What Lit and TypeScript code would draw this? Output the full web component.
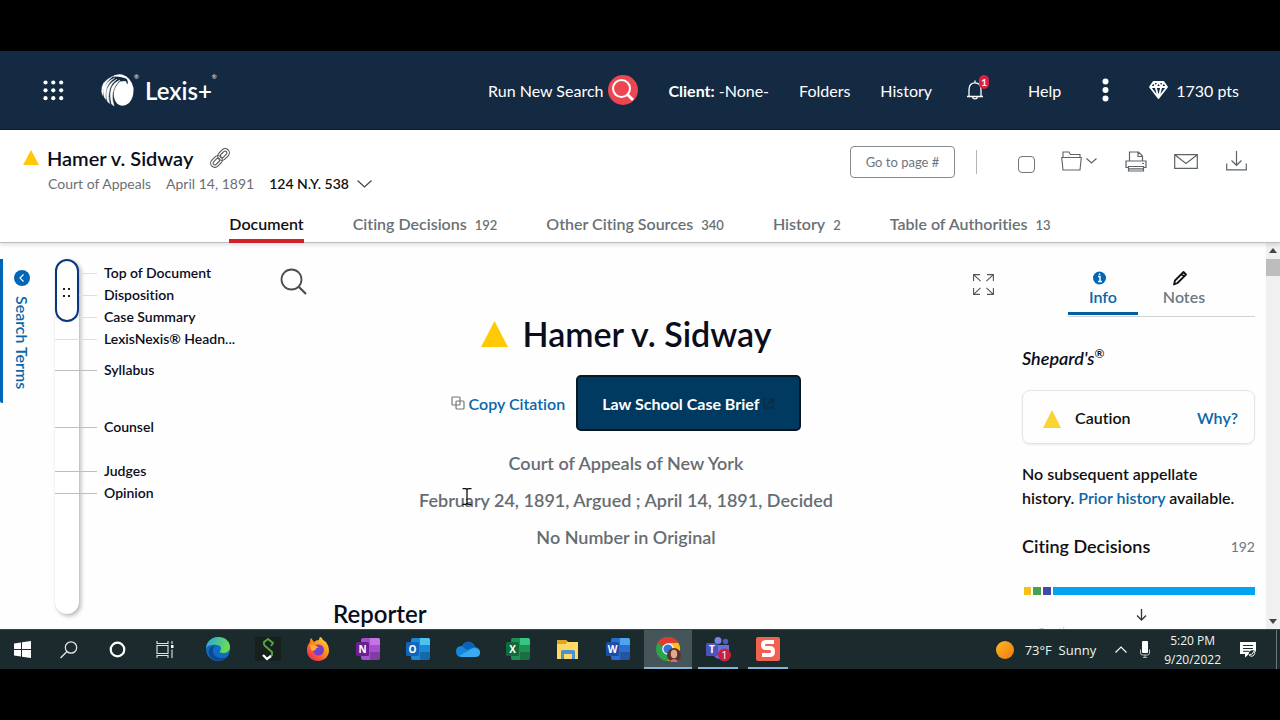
import { LitElement, html, css, svg, nothing } from "lit";
import { customElement } from "lit/decorators.js";
import { classMap } from "lit/directives/class-map.js";
import { styleMap } from "lit/directives/style-map.js";

const caution = html`<svg class="caution" viewBox="0 0 16 16" preserveAspectRatio="none" aria-label="Caution"><path d="M8 0 16 16H0Z" fill="currentColor" /></svg>`;

const base = css`
  :host { display: block; box-sizing: border-box; font-family: Lato, "Liberation Sans", sans-serif; font-variant-ligatures: none; color: #0a0d1c; }
  * { box-sizing: border-box; }
  svg { display: block; flex: none; }
  a { color: inherit; text-decoration: none; }
  button { font: inherit; color: inherit; background: none; border: 0; padding: 0; margin: 0; cursor: pointer; }
  h1, h2, h3, p, ol, ul { margin: 0; padding: 0; }
  ol, ul { list-style: none; }
`;

@customElement("site-header")
class SiteHeader extends LitElement {
  static styles = [base, css`
    .bar { display: flex; align-items: center; height: 79px; padding: 0 41px 0 43px; background: #142a42; border-bottom: 1px solid #0b1c30; color: #fff; font-size: 16px; }
    .brand { display: flex; align-items: center; margin-left: 37px; }
    .word { font-size: 24px; font-weight: 600; margin-left: 6px; }
    .reg { font-size: 6px; align-self: flex-start; }
    nav { display: flex; align-items: center; gap: 30px; margin-left: auto; }
    .run { display: flex; align-items: center; gap: 5px; }
    b { font-weight: 700; }
    .bell { position: relative; width: 36px; padding-left: 4px; }
    .count { position: absolute; left: 17px; top: -5px; width: 10px; height: 14px; border-radius: 7px; background: #dc1f45; font-size: 10px; line-height: 14px; font-weight: 700; text-align: center; }
    .more { width: 28px; display: grid; place-items: center; }
    .pts { display: flex; align-items: center; gap: 8px; }
  `];
  render() {
    return html`<header class="bar">
      <button aria-label="Products"><svg width="21" height="21" viewBox="0 0 21 21" fill="#fff">
        ${[2.5, 10.3, 18.2].map((y) => [2.5, 10.3, 18.2].map((x) => svg`<circle cx=${x} cy=${y} r="2.1" />`))}</svg></button>
      <a class="brand" href="#">
        <svg width="33" height="34" viewBox="0 0 33 34">
          <path d="M10 4Q15 .5 21 1.500Q30 4 32.500 15Q33 25 28 30Q22 35 16.500 31Q12.500 27 12.800 21Q13 14 19 8.500L24.500 8 26.500 11.500Q27.500 7 25 5.500Q17 2.500 10 4Z" fill="#fff" />
          <path d="M19 7Q6 12 10.500 31L13 33Q8 18 19 7Z M16 6Q2 13 6.500 28.500L8.500 30.500Q5 14 16 6Z M13.500 5Q0 11 3.200 24L5 26.500Q3 12 13.500 5Z M11 4Q0 8 .7 19L1.900 22.500Q2 11 11 4Z" fill="#fff" stroke="#fff" stroke-width=".5" />
        </svg>
        <span class="reg">®</span><span class="word">Lexis+</span><span class="reg">®</span>
      </a>
      <nav>
        <button class="run">Run New Search
          <svg width="30" height="30" viewBox="0 0 30 30" fill="none"><circle cx="15" cy="15" r="15" fill="#ee4650" /><circle cx="13.500" cy="13.500" r="8.500" stroke="#fff" stroke-width="2" /><path d="m19.500 19.500 5.500 5.500" stroke="#fff" stroke-width="2.800" /></svg>
        </button>
        <button><b>Client:</b> -None-</button>
        <a href="#">Folders</a>
        <a href="#">History</a>
        <button class="bell" aria-label="Notifications">
          <svg width="18" height="20" viewBox="0 0 18 20" fill="none" stroke="#fff" stroke-width="1.300"><path d="M1 16.500h16M3 16.500V9.500C3 5 5.500 2.800 9 2.800S15 5 15 9.500v7M9 .5v2.300M6.500 17c.4 2.600 4.600 2.600 5 0" /></svg>
          <span class="count">1</span>
        </button>
        <a href="#">Help</a>
        <button class="more" aria-label="More"><svg width="7" height="24" viewBox="0 0 7 24" fill="#fff"><circle cx="3.500" cy="3.500" r="3" /><circle cx="3.500" cy="12" r="3" /><circle cx="3.500" cy="20.500" r="3" /></svg></button>
        <a class="pts" href="#">
          <svg width="19" height="18" viewBox="0 0 19 18" fill="none" stroke="#fff" stroke-width="1.800" stroke-linejoin="round"><path d="M4.500 1h10l3.500 5-8.500 11L1 6ZM1 6h17M4.500 1l2.200 5 2.800 11 2.800-11 2.200-5M6.700 6 9.500 1l2.800 5" /></svg>
          1730 pts</a>
      </nav>
    </header>`;
  }
}

@customElement("document-header")
class DocumentHeader extends LitElement {
  static styles = [base, css`
    :host { position: relative; z-index: 1; background: #fff; box-shadow: 0 2px 4px rgba(0, 0, 0, .12); border-bottom: 1px solid #bdbdba; }
    .top { display: flex; justify-content: space-between; padding: 16px 33px 0 23px; }
    .name { display: flex; align-items: center; gap: 8px; height: 24px; }
    .name .caution { width: 16px; height: 15px; margin-bottom: 2px; color: #ffca05; }
    h2 { font-size: 20px; line-height: 24px; font-weight: 600; }
    .copy { margin-left: 9px; }
    .meta { display: flex; align-items: center; gap: 15px; padding-left: 25px; font-size: 14px; line-height: 28px; color: #6b6f73; }
    .cite { display: flex; align-items: center; gap: 8px; color: #111; font-weight: 600; }
    .tools { display: flex; align-items: center; height: 32px; color: #5d6468; }
    .page { width: 105px; height: 32px; border: 1px solid #858b8f; border-radius: 4px; background: #fff; font: 400 13px Lato, sans-serif; color: #6b6f73; padding: 0 4px; text-align: center; }
    .page::placeholder { color: #70757a; opacity: 1; }
    .rule { width: 1px; height: 24px; background: #b5b5b5; margin: 0 41px 0 21px; }
    .pick { appearance: none; width: 17px; height: 17px; margin: 5px 26px 0 0; border: 1px solid #6f7579; border-radius: 4px; background: #fff; }
    .folder { display: flex; align-items: center; gap: 4px; margin-right: 28px; }
    .tools button { margin-bottom: 2px; }
    .tools .mail { margin: 0 28px 2px 27px; }
    .tabs { display: flex; justify-content: center; gap: 49px; margin: 11px 0 -1px; font-size: 16px; font-weight: 600; color: #6a7176; }
    .tab { display: flex; align-items: baseline; gap: 8px; height: 34px; line-height: 30px; border-bottom: 4px solid transparent; }
    .tab.on { color: #111; border-color: #d02127; }
    .num { font-size: 13px; }
  `];
  render() {
    const tabs: [string, string][] = [["Document", ""], ["Citing Decisions", "192"], ["Other Citing Sources", "340"], ["History", "2"], ["Table of Authorities", "13"]];
    return html`
      <div class="top">
        <div>
          <div class="name">${caution}<h2>Hamer v. Sidway</h2>
            <button class="copy" aria-label="Copy link"><svg width="20" height="20" viewBox="0 0 20 20" fill="none" stroke="#555" stroke-width="1.100"><g transform="rotate(-45 10 10)"><rect x="-1.500" y="5.800" width="13" height="8.400" rx="4.200" /><rect x="1" y="8.200" width="8" height="3.600" rx="1.800" /><rect x="8.500" y="5.800" width="13" height="8.400" rx="4.200" /><rect x="11" y="8.200" width="8" height="3.600" rx="1.800" /></g></svg></button>
          </div>
          <div class="meta"><span>Court of Appeals</span><span>April 14, 1891</span>
            <button class="cite">124 N.Y. 538 <svg width="15" height="8" viewBox="0 0 15 8" fill="none" stroke="#444" stroke-width="1.200"><path d="m.5.5 7 6.500 7-6.500" /></svg></button></div>
        </div>
        <div class="tools">
          <input class="page" aria-label="Go to page number" placeholder="Go to page #" />
          <span class="rule"></span>
          <input class="pick" type="checkbox" aria-label="Select document" />
          <button class="folder" aria-label="Save to folder">
            <svg width="21" height="20" viewBox="0 0 21 20" fill="none" stroke="currentColor" stroke-width="1.100"><path d="M2 6.500V1h6l1.500 2.500H19v3M.7 6.500h19.600L19 19H2Z" /></svg>
            <svg width="11" height="6" viewBox="0 0 11 6" fill="none" stroke="currentColor" stroke-width="1.200"><path d="m.5.500 5 4.500 5-4.500" /></svg>
          </button>
          <button aria-label="Print"><svg width="22" height="21" viewBox="0 0 22 21" fill="none" stroke="currentColor" stroke-width="1.200"><path d="M4.500 10V1h9l4 4v5M13 1v4.500h4.500M3.500 16.500H1v-6.500h20v6.500h-2.500M3.500 15.500h15V20h-15ZM3.500 17.800h15M17 12.500h2" /></svg></button>
          <button class="mail" aria-label="Email"><svg width="24" height="15" viewBox="0 0 24 15" fill="none" stroke="currentColor" stroke-width="1.200"><path d="M.7.7h22.600v13.600H.7ZM.7.7 12 9.500 23.300.7" /></svg></button>
          <button aria-label="Download"><svg width="21" height="20" viewBox="0 0 21 20" fill="none" stroke="currentColor" stroke-width="1.200"><path d="M10.500 0v14M5.500 9.500l5 4.800 5-4.800M.7 12.500v6.300h19.600v-6.300" /></svg></button>
        </div>
      </div>
      <nav class="tabs">${tabs.map(([t, n], i) => html`<a href="#" class=${classMap({ tab: true, on: i === 0 })}>${t}${n ? html`<span class="num">${n}</span>` : nothing}</a>`)}</nav>`;
  }
}

@customElement("document-outline")
class DocumentOutline extends LitElement {
  static styles = [base, css`
    :host { display: flex; align-items: flex-start; padding-top: 16px; }
    .terms { display: flex; align-items: center; writing-mode: vertical-rl; gap: 10px; width: 45px; height: 144px; padding: 11px 15px 0 11px; border-left: 3px solid #0067b8; border-radius: 0 0 0 2px; color: #0a66a8; font-size: 16px; font-weight: 600; white-space: nowrap; }
    .map { display: grid; flex: 1; margin-left: 10px; }
    .map > * { grid-area: 1 / 1; }
    .track { width: 24px; height: 355px; border-radius: 12px; background: #fff; box-shadow: 2px 2px 4px rgba(0, 0, 0, .28), 0 0 1px rgba(0, 0, 0, .15); }
    ol { padding-top: 3px; font-size: 14px; font-weight: 600; line-height: 22px; }
    li { display: flex; align-items: center; gap: 7px; }
    li::before { content: ""; width: 42px; height: 1px; background: #bcbec2; }
    .pale::before { background: #dcdee1; }
    input { appearance: none; writing-mode: vertical-lr; width: 24px; height: 355px; margin: 0; background: none; }
    input::-webkit-slider-thumb { appearance: none; width: 24px; height: 63px; border: 2px solid #0b3780; border-radius: 12px;
      background: conic-gradient(#222 0 0) 6px 27px / 2px 2px no-repeat, conic-gradient(#222 0 0) 11px 27px / 2px 2px no-repeat, conic-gradient(#222 0 0) 6px 34px / 2px 2px no-repeat, conic-gradient(#222 0 0) 11px 34px / 2px 2px no-repeat, #fff; }
    .find { margin: 9px 26px 0 0; }
  `];
  items: { label: string; space: number; pale?: boolean }[] = [
    { label: "Top of Document", space: 0, pale: true }, { label: "Disposition", space: 0, pale: true }, { label: "Case Summary", space: 0, pale: true },
    { label: "LexisNexis® Headn...", space: 0, pale: true }, { label: "Syllabus", space: 9 }, { label: "Counsel", space: 35 }, { label: "Judges", space: 22 }, { label: "Opinion", space: 0 },
  ];
  render() {
    return html`
      <button class="terms"><svg width="16" height="16" viewBox="0 0 16 16"><circle cx="8" cy="8" r="8" fill="#0067b8" /><path d="M9.500 4.500 6 8l3.500 3.500" fill="none" stroke="#fff" stroke-width="1.200" /></svg>Search Terms</button>
      <div class="map">
        <div class="track"></div>
        <ol>${this.items.map((i) => html`<li class=${classMap({ pale: !!i.pale })} style=${styleMap({ marginTop: `${i.space}px` })}><a href="#">${i.label}</a></li>`)}</ol>
        <input type="range" min="0" max="100" value="0" aria-label="Position in document" />
      </div>
      <button class="find" aria-label="Search in document"><svg width="27" height="27" viewBox="0 0 27 27" fill="none" stroke="#4d4d4d" stroke-width="1.800"><circle cx="11.500" cy="11.500" r="10" /><path d="m18.500 18.500 7.500 7.500" stroke-width="2.200" /></svg></button>`;
  }
}

@customElement("case-document")
class CaseDocument extends LitElement {
  static styles = [base, css`
    :host { text-align: center; }
    h1 { display: flex; align-items: center; justify-content: center; gap: 15px; margin-top: 69px; font-size: 34px; line-height: 44px; font-weight: 600; }
    h1 .caution { width: 27px; height: 26px; color: #ffca05; }
    .actions { display: flex; align-items: center; justify-content: center; gap: 11px; margin: 19px 0 14px; font-size: 16px; font-weight: 600; }
    .copy { display: flex; align-items: center; gap: 4px; color: #0a66a8; }
    .brief { display: flex; align-items: center; gap: 4px; height: 56px; padding: 0 25px 0 24px; background: #003a61; border: 2px solid #0b1622; border-radius: 5px; color: #fff; font-weight: 700; }
    .court { font-size: 18px; line-height: 37px; font-weight: 600; color: #666d71; }
    h2 { text-align: left; margin-top: 43px; font-size: 24px; line-height: 30px; font-weight: 600; }
  `];
  render() {
    return html`
      <h1>${caution}Hamer v. Sidway</h1>
      <div class="actions">
        <button class="copy"><svg width="14" height="14" viewBox="0 0 14 14" fill="none" stroke="#777" stroke-width="1.200"><rect x="1" y="1" width="8" height="8" rx="1" /><rect x="5" y="5" width="8" height="8" rx="1" /></svg>Copy Citation</button>
        <a class="brief" href="#">Law School Case Brief<svg width="11" height="11" viewBox="0 0 11 11" fill="none" stroke="#10273d" stroke-width="1.200"><path d="M4 1H1v9h9V7M3.500 7.500l6-6M6 1h4v4" /></svg></a>
      </div>
      <p class="court">Court of Appeals of New York</p>
      <p class="court">February 24, 1891, Argued ; April 14, 1891, Decided</p>
      <p class="court">No Number in Original</p>
      <h2>Reporter</h2>`;
  }
}

@customElement("case-sidebar")
class CaseSidebar extends LitElement {
  static styles = [base, css`
    :host { padding-top: 26px; }
    .tabs { display: flex; margin-left: 46px; border-bottom: 1px solid #d0d3d5; height: 48px; font-size: 16px; line-height: 20px; font-weight: 600; color: #6a7a80; }
    .tab { display: flex; flex-direction: column; align-items: center; width: 70px; height: 46px; border-bottom: 3px solid transparent; }
    .tab.on { color: #0a66a8; border-color: #00609f; }
    .tab:last-child { margin-left: 11px; }
    .shep { margin-top: 28px; font-size: 18px; line-height: 26px; font-style: italic; font-weight: 600; }
    sup { font-size: 12px; line-height: 1px; font-style: normal; }
    .card { display: flex; align-items: center; height: 54px; margin-top: 19px; padding: 0 16px 0 20px; border: 1px solid #e2e4e6; border-radius: 8px; box-shadow: 0 1px 2px rgba(0, 0, 0, .08); font-size: 16px; font-weight: 600; color: #111; }
    .card .caution { width: 18px; height: 18px; margin: 4px 14px 0 0; color: #fbd335; }
    .link { color: #0a66a8; }
    .card .link { margin-left: auto; }
    .note { margin-top: 18px; padding-right: 12px; font-size: 16px; line-height: 24px; font-weight: 600; color: #111; }
    .head { display: flex; justify-content: space-between; align-items: center; margin-top: 24px; }
    h3 { font-size: 18px; line-height: 24px; font-weight: 600; color: #111; }
    .total { font-size: 14px; color: #70757a; }
    .chart { display: flex; gap: 2px; height: 8px; margin: 29px 0 14px; padding-left: 2px; }
    .down { display: block; margin-left: 114px; }
    .row { margin: 4px 0 0 15px; font-size: 12px; line-height: 14px; color: #c5c8ca; }
  `];
  render() {
    const parts: [string, string][] = [["#f5bf1c", "0 0 7px"], ["#47a250", "0 0 8px"], ["#4148a5", "0 0 8px"], ["#03a4f2", "1"]];
    return html`
      <div class="tabs">
        <button class="tab on"><svg width="21" height="18" viewBox="-4 0 21 18"><circle cx="2.500" cy="9" r="6.500" fill="#0067b8" /><path d="M1 7.500h2v5M1 12.500h4M2.500 4.500v1.600" fill="none" stroke="#fff" stroke-width="1.400" /></svg>Info</button>
        <button class="tab"><svg width="22" height="18" viewBox="0 0 22 18" fill="none" stroke="#111" stroke-width="1.800" stroke-linejoin="round"><path d="m1 15.500 1-4L10.500 3l2.500 2.500L4.500 14ZM8.500 5l2.500 2.500M1 15.500l2-1" /></svg>Notes</button>
      </div>
      <p class="shep">Shepard's<sup>®</sup></p>
      <div class="card">${caution}Caution<a class="link" href="#">Why?</a></div>
      <p class="note">No subsequent appellate history. <a class="link" href="#">Prior history</a> available.</p>
      <div class="head"><h3>Citing Decisions</h3><span class="total">192</span></div>
      <div class="chart">${parts.map(([background, flex]) => html`<span style=${styleMap({ background, flex })}></span>`)}</div>
      <button class="down" aria-label="Scroll down"><svg width="11" height="12" viewBox="0 0 11 12" fill="none" stroke="#333" stroke-width="1.300"><path d="M5.500 0v11M1 6.500l4.500 4.500L10 6.500" /></svg></button>
      <p class="row">Caution</p>`;
  }
}

const office = (letter: string, back: string, light: string, plate: string) => svg`
  <rect x="6" y="1" width="19" height="22" rx="2" fill=${back} /><path d="M15 1h8q2 0 2 2v5H15Z" fill=${light} /><path d="M15 15h10v6q0 2-2 2h-8Z" fill="#000" opacity=".22" />
  <rect x="1" y="5" width="13" height="14" rx="1.500" fill=${plate} /><text x="7.500" y="15.500" text-anchor="middle" font-family="Open Sans, sans-serif" font-size="10" font-weight="700" fill="#fff">${letter}</text>`;

@customElement("task-bar")
class TaskBar extends LitElement {
  static styles = [base, css`
    :host { display: flex; height: 40px; background: #1b2b2d; color: #f2f4f4; font-family: "Open Sans", "Noto Sans", sans-serif; border-top: 1px solid #3a4446; }
    .group { display: flex; }
    .pins { margin-left: 4px; }
    .app { display: grid; place-items: center; width: 48px; }
    .start { width: 45px; }
    .pins .app { width: 50px; }
    .pins .open { width: 40px; margin: 0 5px; box-shadow: inset 0 -2px #82b4dc; }
    .pins .active { width: 48px; margin: 0 1px; background: #46555a; }
    .tray { display: flex; align-items: center; margin-left: auto; }
    .weather { display: flex; align-items: center; gap: 11px; font-size: 13px; white-space: pre; }
    .up { margin: 0 13px 0 19px; }
    .clock { margin: 0 19px 0 14px; font-size: 12px; line-height: 19px; text-align: center; }
    .peek { width: 4px; height: 39px; margin-left: 19px; border-left: 1px solid #6e797b; }
  `];
  apps = [
    { name: "Edge", art: svg`<defs><linearGradient id="e1" x1="0" y1="0" x2="1" y2=".3"><stop stop-color="#2aa5e0" /><stop offset="1" stop-color="#66dd55" /></linearGradient></defs><circle cx="13" cy="12" r="12" fill="#0f6cc0" /><path d="M1 11C2 4 7 0 13 0c8 0 12 5 12 10 0 4-3 6-7 6-3 0-4-1-3-2 2-2 1-6-3-6-5-1-9 0-11 3Z" fill="url(#e1)" /><path d="M8 12c-1 7 5 11 14 8-4 5-13 5-17-1-3-5-1-10 6-11-2 1-3 2-3 4Z" fill="#0b4a92" />` },
    { name: "Scribe", art: svg`<rect width="26" height="24" fill="#17201d" /><path d="M9 8V5l4-3 5 4-2 3M9 8l8 7v3l-3 2" fill="none" stroke="#58a742" stroke-width="1.800" /><path d="m8 18 4 4 4-3" fill="none" stroke="#fff" stroke-width="2.300" />` },
    { name: "Firefox", art: svg`<defs><linearGradient id="f1" x1="1" y1="0" x2=".2" y2="1"><stop stop-color="#ffe53b" /><stop offset=".5" stop-color="#ff8a20" /><stop offset="1" stop-color="#f0245c" /></linearGradient></defs><path d="M5 5q0-3 1-4l3 4q2-2 5-2 0-3 2-3 2 4 5 5 3 4 3 8c0 7-5 11-11 11S2 20 2 13q0-5 3-8Z" fill="url(#f1)" /><circle cx="13.500" cy="13" r="5.500" fill="#7a3fc8" /><path d="M5 8q5-1 9 3-3-1-3 1-1 3-5 1Z" fill="#ffb22b" />` },
    { name: "OneNote", art: office("N", "#a64fd0", "#c673e6", "#6b1f91") },
    { name: "Outlook", art: office("O", "#1a8ad8", "#50c2f0", "#0f66ba") },
    { name: "OneDrive", art: svg`<path d="M7 20q-6 0-6-5.500T7 9q3-5 8-4 4 1 5 5 5 1 5 5t-5 5Z" fill="#1486dc" /><path d="M7 9q3-5 8-4 4 1 5 5l-8 3Z" fill="#0b63b5" /><path d="M4 19 18 11q7 0 7 5 0 4-5 4H7Z" fill="#3aaaf0" />` },
    { name: "Excel", art: office("X", "#1f8f55", "#36c481", "#0f6b3a") },
    { name: "File Explorer", art: svg`<path d="M2 3h9l2 2h10v17H2Z" fill="#ffd866" /><path d="M2 3h9l1 2-1 2H2Z" fill="#e0a527" /><path d="M6 22v-7q0-2 2-2h10q2 0 2 2v7h-3v-5H9v5Z" fill="#4a93cc" />` },
    { name: "Word", art: office("W", "#2a6fd0", "#4ea5ee", "#1a4fa8") },
    { name: "Chrome", state: "active", art: svg`<circle cx="13" cy="12" r="12" fill="#2ba24c" /><path d="M13 12 2.600 6A12 12 0 0 1 23.400 6H13Z" fill="#e23b2e" /><path d="M13 12V6h10.400A12 12 0 0 1 13 24l5-9Z" fill="#fbc116" /><circle cx="13" cy="12" r="5.800" fill="#fff" /><circle cx="13" cy="12" r="4.600" fill="#3476e0" /><circle cx="19" cy="18" r="7" fill="#5a3527" /><ellipse cx="19" cy="17" rx="3.200" ry="4.200" fill="#e0aa90" /><path d="M15 24q4-4 8 0l-1 1h-6Z" fill="#d66a78" />` },
    { name: "Teams", state: "open", art: svg`<circle cx="13" cy="3.500" r="3.500" fill="#7b83eb" /><circle cx="20.500" cy="4.500" r="2.700" fill="#5059c9" /><path d="M8 8h16v8q-1 6-8 6t-8-6Z" fill="#6a70d8" /><rect x="1" y="6" width="12" height="13" rx="1.500" fill="#4b53bc" /><text x="7" y="16" text-anchor="middle" font-family="Open Sans, sans-serif" font-size="10" font-weight="700" fill="#fff">T</text><circle cx="19.500" cy="18" r="6.500" fill="#c8203f" /><text x="19.500" y="22" text-anchor="middle" font-family="Open Sans, sans-serif" font-size="11" fill="#fff">1</text>` },
    { name: "Snagit", state: "open", art: svg`<rect x="1" y="0" width="24" height="24" rx="2" fill="#f2604f" /><path d="M19 5h-8q-3 0-3 3t3 3h4q3 0 3 3.500T15 18H7" fill="none" stroke="#fff" stroke-width="4" />` },
  ];
  render() {
    return html`
      <div class="group">
        <button class="app start" aria-label="Start"><svg width="17" height="17" viewBox="0 0 17 17" fill="#fff"><path d="M0 2.500 7 1.500V8H0ZM8 1.300 17 0v8H8ZM0 9h7v6.500l-7-1ZM8 9h9v8l-9-1.300Z" /></svg></button>
        <button class="app" aria-label="Search"><svg width="18" height="18" viewBox="0 0 18 18" fill="none" stroke="#e8ecec" stroke-width="1.200"><circle cx="11" cy="6.500" r="5.700" /><path d="M7 10.500.5 17" /></svg></button>
        <button class="app" aria-label="Cortana"><svg width="17" height="17" viewBox="0 0 17 17" fill="none" stroke="#fff" stroke-width="2.200"><circle cx="8.500" cy="8.500" r="6.800" /></svg></button>
        <button class="app" aria-label="Task view"><svg width="18" height="17" viewBox="0 0 18 17" fill="none" stroke="#dfe5e5" stroke-width="1.100"><path d="M1 0v2.500h11V0M1 4.500h11v8H1ZM1 17v-2.500h11V17M16 0v3M16 8.500V17" /><path d="M15 4h2.500v3H15Z" fill="#fff" stroke="none" /></svg></button>
      </div>
      <div class="group pins">${this.apps.map((a) => html`<button aria-label=${a.name} class=${classMap({ app: true, open: !!a.state, active: a.state === "active" })}><svg width="26" height="25" viewBox="0 0 26 25">${a.art}</svg></button>`)}</div>
      <div class="tray">
        <button class="weather"><svg width="18" height="18" viewBox="0 0 18 18"><defs><linearGradient id="s1" x1="0" y1="0" x2="1" y2="1"><stop stop-color="#fcb928" /><stop offset="1" stop-color="#f07a0a" /></linearGradient></defs><circle cx="9" cy="9" r="9" fill="url(#s1)" /></svg>73°F  Sunny</button>
        <button class="up" aria-label="Hidden icons"><svg width="12" height="7" viewBox="0 0 12 7" fill="none" stroke="#fff" stroke-width="1.200"><path d="M.5 6.500 6 1l5.500 5.500" /></svg></button>
        <svg width="10" height="17" viewBox="0 0 10 17"><rect x="2" width="6" height="12" rx="1" fill="#fff" /><path d="M.5 8.500v3.500q0 2 2 2h5q2 0 2-2V8.500M5 14v2M3 16.400h4" fill="none" stroke="#b9c0c0" /></svg>
        <div class="clock">5:20 PM<br />9/20/2022</div>
        <button aria-label="Action center"><svg width="17" height="18" viewBox="0 0 17 18"><path d="M0 1h16v12H9l-4 3.500V13H0Z" fill="#fff" /><path d="M3 4.500h10M3 7.500h10M3 10.300h6" stroke="#1b2b2d" /><circle cx="12.500" cy="13" r="3.800" fill="#1b2b2d" /><path d="M14 10q2 3-1 5-2 1-4-1 4 0 5-4Z" fill="#1b2b2d" stroke="#e8ecec" /></svg></button>
        <span class="peek"></span>
      </div>`;
  }
}

@customElement("app-root")
class AppRoot extends LitElement {
  static styles = [base, css`
    :host { position: relative; display: flex; flex-direction: column; height: 100vh; padding: 51px 0; background: #000; overflow: hidden; }
    main { display: grid; grid-template: minmax(0, 1fr) / 333px minmax(0, 1fr) 103px 233px 11px 14px; flex: 1; min-height: 0; overflow: hidden; background: #fefefe; }
    .expand { justify-self: end; align-self: start; margin: 31px 28px 0 0; }
    .scroll { grid-column: 6; display: flex; flex-direction: column; align-items: center; padding: 5px 0; background: #f0f0f0; }
    .thumb { width: 14px; height: 17px; margin-top: 6px; background: #bdbdbd; }
    .scroll svg:last-child { margin-top: auto; }
    .pointer { position: absolute; left: 462px; top: 488px; }
  `];
  render() {
    return html`
      <site-header></site-header>
      <document-header></document-header>
      <main>
        <document-outline></document-outline>
        <case-document></case-document>
        <button class="expand" aria-label="Expand"><svg width="21" height="21" viewBox="0 0 21 21" fill="none" stroke="#555" stroke-width="1.100"><path d="M.6 7V.6H7M14 .6h6.400V7M.6 14v6.400H7M14 20.400h6.400V14M.6.6l7 6.500M20.400.6l-7 6.500M.6 20.400l7-6.500M20.400 20.400l-7-6.500" /></svg></button>
        <case-sidebar></case-sidebar>
        <div class="scroll">
          <svg width="8" height="5" viewBox="0 0 8 5"><path d="M0 5 4 0l4 5Z" fill="#444" /></svg>
          <span class="thumb"></span>
          <svg width="8" height="5" viewBox="0 0 8 5"><path d="m0 0 4 5 4-5Z" fill="#444" /></svg>
        </div>
      </main>
      <task-bar></task-bar>
      <svg class="pointer" width="10" height="17" viewBox="0 0 10 17" fill="none" stroke="#111" stroke-width="1.300"><path d="M.5.7h3.500L5 1.700 6 .7h3.500M5 1.700v13.600M.5 16.300h3.500l1-1 1 1h3.500" /></svg>`;
  }
}
